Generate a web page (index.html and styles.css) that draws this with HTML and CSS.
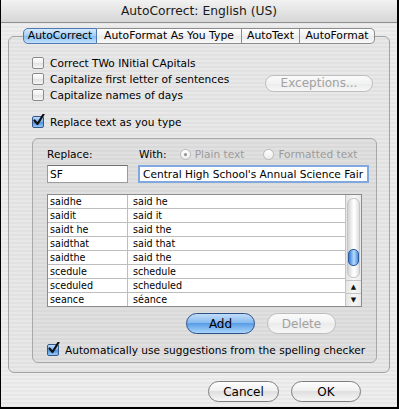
FILE: index.html
```html
<!DOCTYPE html>
<html lang="en">
<head>
    <meta charset="UTF-8">
    <meta name="viewport" content="width=device-width, initial-scale=1.0">
    <title>AutoCorrect: English (US)</title>
    <link rel="stylesheet" href="styles.css">
</head>
<body>
<div class="window">
    <div class="titlebar">AutoCorrect: English (US)</div>
    <div class="content">
        <div class="tabs">
            <span class="tab selected">AutoCorrect</span>
            <span class="tab">AutoFormat As You Type</span>
            <span class="tab">AutoText</span>
            <span class="tab">AutoFormat</span>
        </div>

        <div class="group">
            <div class="options">
                <div class="checks">
                    <label class="check"><span class="box"></span>Correct TWo INitial CApitals</label>
                    <label class="check"><span class="box"></span>Capitalize first letter of sentences</label>
                    <label class="check"><span class="box"></span>Capitalize names of days</label>
                </div>
                <button class="btn disabled exceptions">Exceptions...</button>
            </div>

            <label class="check replace-row">
                <span class="box checked"><svg width="13" height="13" viewBox="0 0 13 13"><path d="M2.5 6.5 L5.5 10 L11.5 0.5" fill="none" stroke="#111" stroke-width="2.2" stroke-linecap="round" stroke-linejoin="round"/></svg></span>
                Replace text as you type
            </label>

            <div class="inner">
                <div class="fields">
                    <span class="field-label">Replace:</span>
                    <div class="with-row">
                        <span class="field-label">With:</span>
                        <span class="radio on"></span><span class="radio-label">Plain text</span>
                        <span class="radio second"></span><span class="radio-label">Formatted text</span>
                    </div>
                    <div class="input">SF</div>
                    <div class="input focused">Central High School's Annual Science Fair</div>
                </div>

                <div class="list">
                    <div class="rows">
                        <div class="row"><span>saidhe</span><span>said he</span></div>
                        <div class="row"><span>saidit</span><span>said it</span></div>
                        <div class="row"><span>saidt he</span><span>said the</span></div>
                        <div class="row"><span>saidthat</span><span>said that</span></div>
                        <div class="row"><span>saidthe</span><span>said the</span></div>
                        <div class="row"><span>scedule</span><span>schedule</span></div>
                        <div class="row"><span>sceduled</span><span>scheduled</span></div>
                        <div class="row"><span>seance</span><span>séance</span></div>
                    </div>
                    <div class="scrollbar">
                        <div class="track"><div class="thumb"></div></div>
                        <div class="arrow">▲</div>
                        <div class="arrow">▼</div>
                    </div>
                </div>

                <div class="list-buttons">
                    <button class="btn default">Add</button>
                    <button class="btn disabled">Delete</button>
                </div>

                <label class="check auto-row">
                    <span class="box checked"><svg width="13" height="13" viewBox="0 0 13 13"><path d="M2.5 6.5 L5.5 10 L11.5 0.5" fill="none" stroke="#111" stroke-width="2.2" stroke-linecap="round" stroke-linejoin="round"/></svg></span>
                    Automatically use suggestions from the spelling checker
                </label>
            </div>
        </div>

        <div class="dialog-buttons">
            <button class="btn cancel">Cancel</button>
            <button class="btn ok">OK</button>
        </div>
    </div>
</div>
</body>
</html>
```

FILE: styles.css
```css
body {
    margin: 0;
    font-family: "DejaVu Sans", sans-serif;
    font-size: 10.6px;
    color: #000;
}
.window {
    width: 399px;
    height: 409px;
    box-sizing: border-box;
    border-left: 1px solid #000;
    border-right: 2px solid #000;
    border-bottom: 2px solid #000;
    background: repeating-linear-gradient(to bottom, #eeeeee 0 2px, #e7e7e7 2px 4px);
    overflow: hidden;
}
.titlebar {
    height: 22px;
    line-height: 22px;
    text-align: center;
    font-size: 12.3px;
    color: #1a1a1a;
    background: linear-gradient(to bottom, #f2f2f2, #d6d6d6);
    border-bottom: 1px solid #8f8f8f;
}
.content {
    padding: 5px 7px 0 7px;
}

/* tabs */
.tabs {
    position: relative;
    z-index: 1;
    display: grid;
    grid-template-columns: 74px 145px 58px 75px;
    justify-content: center;
    height: 16px;
}
.tab {
    box-sizing: border-box;
    height: 16px;
    line-height: 14px;
    text-align: center;
    font-size: 10.8px;
    white-space: nowrap;
    background: linear-gradient(to bottom, #ffffff, #f1f1f1 50%, #e9e9e9 50%, #fafafa);
    border: 1px solid #8c8c8c;
    border-left: none;
}
.tab.selected {
    background: linear-gradient(to bottom, #d4e9fc, #a4cdf5 50%, #86bdf2 50%, #c4e2fd);
    border: 1px solid #4f79b3;
    border-radius: 5px 0 0 5px;
}
.tab:last-child {
    border-radius: 0 5px 5px 0;
}

/* group boxes */
.group {
    margin-top: -8px;
    border: 1px solid #a3a3a3;
    border-radius: 6px;
    background: rgba(0, 0, 0, 0.025);
    padding: 18px 12px 9px 23px;
}
.options {
    display: flex;
    justify-content: space-between;
}
.check {
    display: flex;
    align-items: center;
    height: 16px;
    gap: 6px;
    white-space: nowrap;
}
.box {
    position: relative;
    box-sizing: border-box;
    width: 12px;
    height: 12px;
    flex: none;
    border: 1px solid #8a8a8a;
    border-radius: 2px;
    background: linear-gradient(to bottom, #ffffff, #efefef 50%, #e1e1e1 50%, #f6f6f6);
}
.box.checked {
    border-color: #35578b;
    background: linear-gradient(to bottom, #bcdcfb, #74aeee 50%, #4b8fe0 50%, #94c8f7);
}
.box svg {
    position: absolute;
    left: -1px;
    top: -3px;
}
.replace-row {
    margin-top: 11px;
}
.inner {
    margin-top: 8px;
    border: 1px solid #a8a8a8;
    border-radius: 6px;
    background: rgba(0, 0, 0, 0.03);
    padding: 8px 14px 4px 14px;
}

/* replace / with fields */
.fields {
    display: grid;
    grid-template-columns: 81px 231px;
    column-gap: 10px;
    row-gap: 4px;
    margin-right: -7px;
}
.field-label {
    height: 14px;
    line-height: 14px;
}
.with-row {
    display: flex;
    align-items: center;
    height: 14px;
    padding-left: 1px;
}
.radio {
    box-sizing: border-box;
    width: 11px;
    height: 11px;
    margin-left: 13px;
    margin-right: 4px;
    border: 1px solid #b9b9b9;
    border-radius: 50%;
    background: linear-gradient(to bottom, #ffffff, #ececec);
    display: flex;
    align-items: center;
    justify-content: center;
}
.radio.on::after {
    content: "";
    width: 3px;
    height: 3px;
    border-radius: 50%;
    background: #8e8e8e;
}
.radio.second {
    margin-left: 19px;
}
.radio-label {
    color: #9b9b9b;
}
.input {
    box-sizing: border-box;
    height: 18px;
    line-height: 16px;
    padding-left: 2px;
    background: #fff;
    border: 1px solid #9a9a9a;
    border-top-color: #6f6f6f;
    white-space: nowrap;
    overflow: hidden;
}
.input.focused {
    border: 2px solid #7ea8de;
    line-height: 14px;
    padding-left: 3px;
}

/* list */
.list {
    display: flex;
    margin-top: 11px;
    border: 1px solid #8c8c8c;
    background: #fff;
}
.rows {
    flex: 1;
}
.row {
    display: grid;
    grid-template-columns: 80px 1fr;
    box-sizing: border-box;
    height: 14px;
    line-height: 13px;
    font-size: 9.6px;
    border-bottom: 1px solid #bdbdbd;
}
.row:last-child {
    border-bottom: none;
    height: 13px;
}
.row span {
    padding-left: 2px;
}
.row span:first-child {
    border-right: 1px solid #bdbdbd;
}
.row span:last-child {
    padding-left: 5px;
}
.scrollbar {
    width: 15px;
    display: flex;
    flex-direction: column;
    border-left: 1px solid #c4c4c4;
    background: linear-gradient(to right, #e4e4e4, #f7f7f7 50%, #eaeaea);
}
.track {
    flex: 1;
    margin: 3px 1px 2px 1px;
    border: 1px solid #c6c6c6;
    border-radius: 6px;
    background: linear-gradient(to right, #d2d2d2, #fbfbfb 45%, #ffffff 60%, #dedede);
}
.thumb {
    box-sizing: border-box;
    width: 11px;
    height: 17px;
    margin: 50px auto 0 auto;
    border: 1px solid #2a5aa0;
    border-radius: 5px;
    background: linear-gradient(to right, #3a7ad8, #9ccaf7 45%, #b9dcfb 55%, #4d8ee2);
}
.arrow {
    height: 12px;
    line-height: 12px;
    text-align: center;
    font-size: 7px;
    color: #111;
    border-top: 1px solid #c4c4c4;
}

/* buttons */
.btn {
    box-sizing: border-box;
    height: 21px;
    padding: 0;
    font-family: "DejaVu Sans", sans-serif;
    font-size: 12px;
    color: #000;
    border: 1px solid #7d7d7d;
    border-radius: 11px;
    background: linear-gradient(to bottom, #fdfdfd, #efefef 50%, #dfdfdf 50%, #f6f6f6);
}
.btn.disabled {
    color: #a2a2a2;
    border-color: #bdbdbd;
    background: linear-gradient(to bottom, #fafafa, #f2f2f2 50%, #ebebeb 50%, #f7f7f7);
}
.btn.default {
    border-color: #2d4f86;
    background: linear-gradient(to bottom, #c1ddf9, #82b8f0 50%, #5a9de6 50%, #a9d5fb);
}
.exceptions {
    width: 108px;
    height: 17px;
    line-height: 15px;
    margin-top: 20px;
    margin-right: 4px;
    border-radius: 9px;
}
.list-buttons {
    display: flex;
    justify-content: flex-end;
    gap: 12px;
    margin-top: 6px;
    padding-right: 26px;
}
.list-buttons .btn {
    width: 69px;
}
.auto-row {
    margin-top: 8px;
}
.dialog-buttons {
    display: flex;
    justify-content: flex-end;
    gap: 12px;
    margin-top: 8px;
    padding-right: 29px;
}
.cancel {
    width: 71px;
}
.ok {
    width: 70px;
}
```
